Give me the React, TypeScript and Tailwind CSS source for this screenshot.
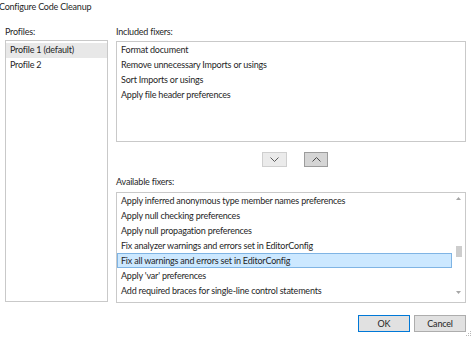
const profiles = ['Profile 1 (default)', 'Profile 2']

const included = [
  'Format document',
  'Remove unnecessary Imports or usings',
  'Sort Imports or usings',
  'Apply file header preferences',
]

const available = [
  'Apply inferred anonymous type member names preferences',
  'Apply null checking preferences',
  'Apply null propagation preferences',
  'Fix analyzer warnings and errors set in EditorConfig',
  'Fix all warnings and errors set in EditorConfig',
  "Apply 'var' preferences",
  'Add required braces for single-line control statements',
]

const Chevron = ({ up, className }: { up?: boolean; className?: string }) => (
  <svg width="9" height="5" viewBox="0 0 9 5" className={className}>
    <path
      d={up ? 'M0.5 4.5 L4.5 0.5 L8.5 4.5' : 'M0.5 0.5 L4.5 4.5 L8.5 0.5'}
      fill="none"
      stroke="currentColor"
      strokeWidth="1"
    />
  </svg>
)

const Tri = ({ up }: { up?: boolean }) => (
  <svg width="5" height="3" viewBox="0 0 5 3">
    <path d={up ? 'M0 3 L2.5 0 L5 3 Z' : 'M0 0 L2.5 3 L5 0 Z'} fill="#a6a6a6" />
  </svg>
)

export default function App() {
  const selected = 4

  return (
    <div
      className="w-[474px] h-[339px] bg-white overflow-hidden text-[9px] tracking-[-0.2px] text-[#1f1f1f] relative"
      style={{ fontFamily: 'Lato, "Open Sans", sans-serif' }}
    >
      <div className="h-[14px] leading-[14px] -ml-[1px]">Configure Code Cleanup</div>

      <div className="flex mt-[11px] pl-[5px]">
        {/* profiles */}
        <div className="w-[103px] shrink-0">
          <div className="h-[14px] leading-[14px]">Profiles:</div>
          <div className="mt-[1px] h-[262px] border border-[#c9c9c9] pt-[2px]">
            {profiles.map((p, i) => (
              <div
                key={p}
                className={`h-[15px] leading-[14px] pl-[4px] ${i === 0 ? 'bg-[#e8e8e8]' : ''}`}
              >
                {p}
              </div>
            ))}
          </div>
        </div>

        {/* fixers */}
        <div className="ml-[8px] w-[350px] shrink-0">
          <div className="h-[14px] leading-[14px]">Included fixers:</div>
          <div className="mt-[2px] h-[101px] border border-[#c9c9c9]">
            {included.map((f) => (
              <div key={f} className="h-[15px] leading-[15px] pl-[4px]">
                {f}
              </div>
            ))}
          </div>

          <div className="mt-[10px] flex gap-[17px] pl-[146px]">
            <button className="w-[25px] h-[15px] border border-[#cfcfcf] bg-[#ebebeb] flex items-center justify-center text-[#5a5a5a]">
              <Chevron />
            </button>
            <button className="w-[24px] h-[15px] border border-[#9c9c9c] bg-[#d5d5d5] flex items-center justify-center text-[#4a4a4a]">
              <Chevron up />
            </button>
          </div>

          <div className="mt-[8px] h-[14px] leading-[14px]">Available fixers:</div>
          <div className="mt-[3px] h-[111px] border border-[#c9c9c9] flex">
            <div className="flex-1 min-w-0">
              {available.map((f, i) => (
                <div
                  key={f}
                  className={`h-[15px] leading-[13px] pl-[3px] whitespace-nowrap overflow-hidden border ${
                    i === selected ? 'bg-[#cce8ff] border-[#7fb4e4]' : 'border-transparent'
                  }`}
                >
                  {f}
                </div>
              ))}
            </div>
            <div className="w-[13px] flex flex-col items-center pt-[4px]">
              <Tri up />
              <div className="w-[6px] h-[11px] bg-[#cdcdcd] mt-[46px]" />
              <div className="mt-[34px] flex">
                <Tri />
              </div>
            </div>
          </div>
        </div>
      </div>

      <div className="mt-[12px] flex justify-end gap-[4px] pr-[8px]">
        <button className="w-[52px] h-[17px] border border-[#0078d7] bg-[#e1e1e1] leading-[15px] text-center">
          OK
        </button>
        <button className="w-[52px] h-[17px] border border-[#adadad] bg-[#e1e1e1] leading-[15px] text-center">
          Cancel
        </button>
      </div>

      <svg width="8" height="8" viewBox="0 0 8 8" className="absolute right-[2px] bottom-[2px]">
        <rect x="6" y="2" width="1" height="1" fill="#b8b8b8" />
        <rect x="4" y="4" width="1" height="1" fill="#b8b8b8" />
        <rect x="6" y="4" width="1" height="1" fill="#b8b8b8" />
        <rect x="2" y="6" width="1" height="1" fill="#b8b8b8" />
        <rect x="4" y="6" width="1" height="1" fill="#b8b8b8" />
        <rect x="6" y="6" width="1" height="1" fill="#b8b8b8" />
      </svg>
    </div>
  )
}
